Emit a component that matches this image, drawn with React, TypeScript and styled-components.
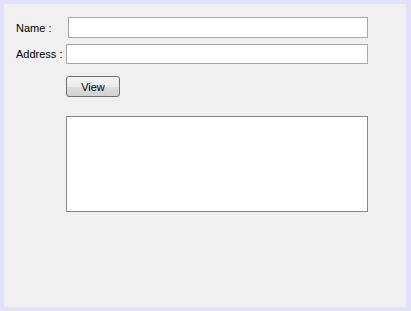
import React from "react";
import styled, { createGlobalStyle } from "styled-components";

const Global = createGlobalStyle`
  html, body { margin: 0; padding: 0; background: #ffffff; }
  * { box-sizing: border-box; }
`;

const Frame = styled.div`
  width: 411px;
  height: 311px;
  border-style: solid;
  border-color: #e1e1fb;
  border-width: 4px 5px 4px 4px;
  background: #f0f0f0;
  padding: 13px 0 0 12px;
  display: flex;
  flex-direction: column;
  font-family: Tahoma, "DejaVu Sans", "Liberation Sans", sans-serif;
  font-size: 11px;
  color: #000;
`;

const Row = styled.div<{ $mt?: number }>`
  display: flex;
  align-items: center;
  margin-top: ${(p) => p.$mt ?? 0}px;
`;

const Label = styled.span<{ $w: number }>`
  width: ${(p) => p.$w}px;
  font-family: "Liberation Sans", Arial, sans-serif;
  font-size: 11px;
  white-space: nowrap;
`;

const Field = styled.input<{ $w: number; $h: number }>`
  width: ${(p) => p.$w}px;
  height: ${(p) => p.$h}px;
  border: 1px solid #a9a9a9;
  background: #ffffff;
  margin: 0;
  padding: 0 3px;
  outline: none;
`;

const Indent = styled.div<{ $mt: number }>`
  padding-left: 50px;
  margin-top: ${(p) => p.$mt}px;
  display: flex;
`;

const Button = styled.button`
  width: 54px;
  height: 21px;
  border: 1px solid #707070;
  border-radius: 3px;
  background: linear-gradient(#f4f4f4 0%, #ebebeb 50%, #dddddd 51%, #d0d0d0 100%);
  font-family: "Liberation Sans", Arial, sans-serif;
  font-size: 11px;
  color: #000;
  padding: 0;
  margin: 0;
`;

const Area = styled.textarea`
  width: 302px;
  height: 96px;
  border: 1px solid #828790;
  background: #ffffff;
  resize: none;
  margin: 0;
  outline: none;
`;

export default function App() {
  return (
    <>
      <Global />
      <Frame>
        <Row>
          <Label $w={52}>Name :</Label>
          <Field $w={300} $h={21} />
        </Row>
        <Row $mt={6}>
          <Label $w={50}>Address :</Label>
          <Field $w={302} $h={20} />
        </Row>
        <Indent $mt={12}>
          <Button>View</Button>
        </Indent>
        <Indent $mt={19}>
          <Area />
        </Indent>
      </Frame>
    </>
  );
}
